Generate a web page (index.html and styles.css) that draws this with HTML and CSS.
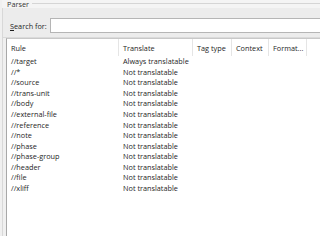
FILE: index.html
```html
<!DOCTYPE html>
<html>
<head>
<meta charset="utf-8">
<link rel="stylesheet" href="styles.css">
</head>
<body>
<div class="group">
  <div class="legend-row"><span class="legend">Parser</span><span class="legend-line"></span></div>
  <div class="band">
    <div class="search-row">
      <label class="search-label"><u>S</u>earch for:</label>
      <div class="search-input"></div>
    </div>
  </div>
  <div class="list">
    <div class="head">
      <div class="hc c1">Rule</div>
      <div class="hc c2">Translate</div>
      <div class="hc c3">Tag type</div>
      <div class="hc c4">Context</div>
      <div class="hc c5">Format...</div>
      <div class="hc c6"></div>
    </div>
    <div class="rows">
      <div class="row"><span class="c1">//target</span><span class="c2">Always translatable</span></div>
      <div class="row"><span class="c1">//*</span><span class="c2">Not translatable</span></div>
      <div class="row"><span class="c1">//source</span><span class="c2">Not translatable</span></div>
      <div class="row"><span class="c1">//trans-unit</span><span class="c2">Not translatable</span></div>
      <div class="row"><span class="c1">//body</span><span class="c2">Not translatable</span></div>
      <div class="row"><span class="c1">//external-file</span><span class="c2">Not translatable</span></div>
      <div class="row"><span class="c1">//reference</span><span class="c2">Not translatable</span></div>
      <div class="row"><span class="c1">//note</span><span class="c2">Not translatable</span></div>
      <div class="row"><span class="c1">//phase</span><span class="c2">Not translatable</span></div>
      <div class="row"><span class="c1">//phase-group</span><span class="c2">Not translatable</span></div>
      <div class="row"><span class="c1">//header</span><span class="c2">Not translatable</span></div>
      <div class="row"><span class="c1">//file</span><span class="c2">Not translatable</span></div>
      <div class="row"><span class="c1">//xliff</span><span class="c2">Not translatable</span></div>
    </div>
  </div>
</div>
</body>
</html>
```
FILE: styles.css
```css
html, body {
  margin: 0;
  padding: 0;
  width: 320px;
  height: 236px;
  overflow: hidden;
  background: #f0f0f0;
  font-family: "Open Sans", "Noto Sans", sans-serif;
  font-size: 7.3px;
  color: #1e1e1e;
}
.group {
  margin-left: 2px;
  border-left: 1px solid #d8d8d8;
  height: 236px;
  display: flex;
  flex-direction: column;
}
.legend-row {
  display: flex;
  align-items: center;
  height: 8px;
  margin-left: -1px;
  background: #f4f4f4;
}
.legend {
  padding: 0 3px 0 5px;
  line-height: 8px;
  color: #333;
  background: #f4f4f4;
}
.legend-line {
  flex: 1;
  border-top: 1px solid #d5d5d5;
  margin-top: -2px;
}
.band {
  background: #ececec;
  padding: 10px 0 4px 0;
  border-bottom: 1px solid #dadada;
}
.search-row {
  display: flex;
  align-items: center;
  height: 15px;
}
.search-label {
  width: 40px;
  padding-left: 7px;
}
.search-label u {
  text-decoration-thickness: 0.5px;
}
.search-input {
  flex: 1;
  height: 13px;
  background: #fff;
  border: 1px solid #b5b5b5;
  border-right: none;
}
.list {
  margin-left: 3px;
  margin-top: 0;
  flex: 1;
  background: #fff;
  border-left: 1px solid #a8a8a8;
  border-top: 1px solid #c8c8c8;
}
.head {
  display: flex;
  height: 17px;
  align-items: stretch;
}
.hc {
  border-right: 1px solid #e5e5e5;
  padding-left: 4px;
  display: flex;
  align-items: center;
  box-sizing: border-box;
}
.c1 { width: 112px; }
.c2 { width: 74px; }
.c3 { width: 39px; }
.c4 { width: 37px; }
.c5 { width: 38px; }
.hc.c6 { border-right: none; flex: 1; }
.rows {
  padding-top: 0;
}
.row {
  display: flex;
  height: 10.55px;
  align-items: center;
}
.row span {
  padding-left: 4px;
  box-sizing: border-box;
  white-space: nowrap;
}
```
